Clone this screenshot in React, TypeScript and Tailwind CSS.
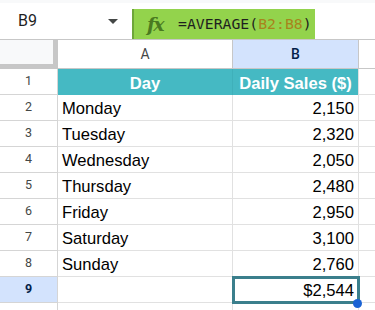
import React from "react";

const rows: [string, string][] = [
  ["Monday", "2,150"],
  ["Tuesday", "2,320"],
  ["Wednesday", "2,050"],
  ["Thursday", "2,480"],
  ["Friday", "2,950"],
  ["Saturday", "3,100"],
  ["Sunday", "2,760"],
];

function RowHead({ n, active }: { n: number; active?: boolean }) {
  return (
    <div
      className={
        "w-[58px] shrink-0 h-full flex items-center justify-center border-r border-b border-[#d5d5d5] text-[12.5px] font-['Roboto',sans-serif] " +
        (active ? "bg-[#d3e3fd] text-[#041e49] font-bold" : "bg-white text-[#444746]")
      }
    >
      {n}
    </div>
  );
}

export default function App() {
  return (
    <div className="w-[375px] h-[310px] overflow-hidden bg-white relative font-['Liberation_Sans',Arial,sans-serif]">
      <div className="h-[3px] bg-[#f8f9fa]" />
      <div className="h-[37px] flex items-end border-b border-[#c7c7c7]">
        <div className="w-[132px] h-[36px] flex items-center pl-[18px] pr-[14px] shrink-0">
          <span className="text-[16px] text-[#1f1f1f] font-['Roboto',sans-serif]">B9</span>
          <span className="ml-auto w-0 h-0 border-l-[5px] border-r-[5px] border-t-[5px] border-l-transparent border-r-transparent border-t-[#444746]" />
        </div>
        <div className="w-[183px] h-[30px] bg-[#93d34c] border-l-2 border-[#6ea63a] flex items-center shrink-0">
          <span className="ml-[13px] w-[18px] text-[19px] italic font-bold text-[#4a7a20] font-['DejaVu_Serif',serif] leading-none tracking-[-2px]">
            fx
          </span>
          <span className="ml-[13px] text-[14.8px] font-['DejaVu_Sans_Mono',monospace] text-[#1f1f1f]">
            =AVERAGE(<span className="text-[#a8841c]">B2:B8</span>)
          </span>
        </div>
        <div className="flex-1" />
      </div>

      {/* column headers */}
      <div className="h-[29px] flex">
        <div className="w-[58px] shrink-0 h-full bg-[#f8f9fa] border-r-[5px] border-b-[5px] border-[#c7c7c7]" />
        <div className="w-[175px] shrink-0 h-full flex items-center justify-center border-r border-b border-[#c7c7c7] text-[14px] text-[#444746] font-['Roboto',sans-serif]">
          A
        </div>
        <div className="w-[126px] shrink-0 h-full flex items-center justify-center bg-[#d3e3fd] border-r border-b border-[#c7c7c7] text-[14px] text-[#041e49] font-['Roboto',sans-serif] font-medium">
          B
        </div>
        <div className="flex-1 h-full border-b border-[#c7c7c7]" />
      </div>

      {/* header row 1 */}
      <div className="h-[26px] flex">
        <RowHead n={1} />
        <div className="w-[175px] shrink-0 h-full flex items-end justify-center pb-[2px] bg-[#45b9c3] border-r border-[#3fb0ba] text-white font-bold text-[16.6px] leading-[19px]">
          Day
        </div>
        <div className="w-[126px] shrink-0 h-full flex items-end justify-center pb-[2px] bg-[#45b9c3] border-r border-[#e1e1e1] text-white font-bold text-[16.6px] leading-[19px]">
          Daily Sales ($)
        </div>
        <div className="flex-1 h-full border-b border-[#e1e1e1]" />
      </div>

      {rows.map(([d, v], i) => (
        <div key={d} className="h-[26px] flex">
          <RowHead n={i + 2} />
          <div className="w-[175px] shrink-0 h-full flex items-end px-[4px] pb-[2px] border-r border-b border-[#e1e1e1] text-[#000] text-[16.6px] leading-[19px]">
            {d}
          </div>
          <div className="w-[126px] shrink-0 h-full flex items-end justify-end px-[4px] pb-[2px] border-r border-b border-[#e1e1e1] text-[#000] text-[16.6px] leading-[19px]">
            {v}
          </div>
          <div className="flex-1 h-full border-b border-[#e1e1e1]" />
        </div>
      ))}

      {/* row 9 */}
      <div className="h-[26px] flex">
        <RowHead n={9} active />
        <div className="w-[175px] shrink-0 h-full border-r border-b border-[#e1e1e1]" />
        <div className="w-[126px] shrink-0 h-full flex items-end justify-end px-[4px] pb-[2px] border-r border-b border-[#e1e1e1] text-[#000] text-[16.6px] leading-[19px]">
          $2,544
        </div>
        <div className="flex-1 h-full border-b border-[#e1e1e1]" />
      </div>

      {/* row 10 */}
      <div className="h-[26px] flex">
        <div className="w-[58px] shrink-0 h-full border-r border-[#d5d5d5]" />
        <div className="w-[175px] shrink-0 h-full border-r border-[#e1e1e1]" />
        <div className="w-[126px] shrink-0 h-full border-r border-[#e1e1e1]" />
        <div className="flex-1 h-full" />
      </div>

      {/* selection */}
      <div className="absolute left-[232px] top-[276px] w-[128px] h-[28px] border-[3px] border-[#3b7f8c] pointer-events-none" />
      <div className="absolute left-[353px] top-[299px] w-[9px] h-[9px] rounded-full bg-[#1a63d4]" />
    </div>
  );
}
